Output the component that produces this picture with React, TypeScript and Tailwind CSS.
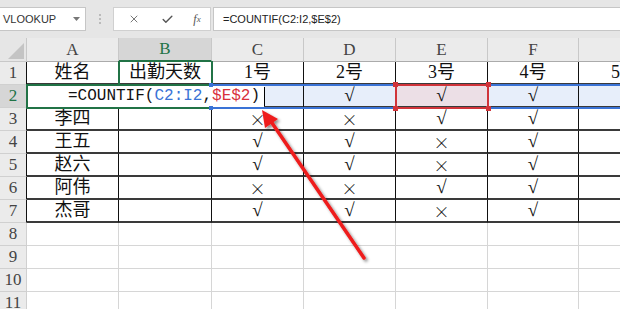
import { X, Check } from 'lucide-react';

const cols = [
  { key: 'A', w: 'w-[92px]' },
  { key: 'B', w: 'w-[93px]' },
  { key: 'C', w: 'w-[92px]' },
  { key: 'D', w: 'w-[92px]' },
  { key: 'E', w: 'w-[92px]' },
  { key: 'F', w: 'w-[91px]' },
  { key: 'G', w: 'w-[92px]' },
];

const table = [
  ['姓名', '出勤天数', '1号', '2号', '3号', '4号', '5号'],
  ['', '', '', '√', '√', '√', ''],
  ['李四', '', '×', '×', '√', '√', ''],
  ['王五', '', '√', '√', '×', '√', ''],
  ['赵六', '', '√', '√', '×', '√', ''],
  ['阿伟', '', '×', '×', '√', '√', ''],
  ['杰哥', '', '√', '√', '×', '√', ''],
];

const serif = "font-[family-name:'Liberation_Serif','Noto_Sans_CJK_SC',serif]";
const cross = "font-[family-name:'Noto_Sans_CJK_SC',sans-serif] font-light text-[16px]";
const tick = 'text-[19px] font-bold';

function Toolbar() {
  return (
    <div className="h-[38px] bg-[#e6e6e6] flex items-start pt-[7px] font-[family-name:'Liberation_Sans',Arial,sans-serif]">
      <div className="w-[86px] h-[24px] bg-white border border-l-0 border-[#c6c6c6] flex items-center pl-[3px] text-[11px] text-[#333]">
        <span className="flex-1">VLOOKUP</span>
        <svg width="7" height="4" viewBox="0 0 7 4" className="mr-[5px]">
          <polygon points="0,0 7,0 3.5,4" fill="#777" />
        </svg>
      </div>
      <div className="w-[27px] flex flex-col items-center gap-[2px] pt-[7px]">
        <div className="w-[2px] h-[2px] bg-[#bbb]" />
        <div className="w-[2px] h-[2px] bg-[#bbb]" />
        <div className="w-[2px] h-[2px] bg-[#bbb]" />
      </div>
      <div className="w-[98px] h-[24px] bg-white border border-[#d0d0d0] flex items-center text-[#555]">
        <div className="w-[36px] flex justify-center pl-[4px]">
          <X className="w-[12px] h-[12px]" strokeWidth={1.6} />
        </div>
        <div className="w-[28px] flex justify-center pl-[6px]">
          <Check className="w-[13px] h-[13px]" strokeWidth={2.6} />
        </div>
        <div className="flex-1 flex justify-center pl-[6px] italic font-[family-name:'Liberation_Serif',serif] text-[12px] text-[#555]">
          f<span className="text-[9px] mt-[3px]">x</span>
        </div>
      </div>
      <div className="ml-[2px] flex-1 h-[24px] bg-white border border-r-0 border-[#c6c6c6] flex items-center pl-[9px] text-[11px] text-[#222]">
        =COUNTIF(C2:I2,$E$2)
      </div>
    </div>
  );
}

function HeaderRow() {
  return (
    <div className={`h-[24px] flex ${serif}`}>
      <div className="w-[27px] h-full bg-[#e6e6e6] border-r border-b border-[#c8c8c8] shrink-0">
        <svg width="27" height="24" viewBox="0 0 27 24">
          <polygon points="24,5 24,21 8,21" fill="#c4c4c4" />
        </svg>
      </div>
      {cols.map((c) =>
        c.key === 'B' ? (
          <div
            key={c.key}
            className={`${c.w} shrink-0 h-full bg-[#d6d6d6] border-r border-[#c8c8c8] border-b-2 border-b-[#217346] flex items-center justify-center text-[17px] text-[#217346]`}
          >
            {c.key}
          </div>
        ) : (
          <div
            key={c.key}
            className={`${c.w} shrink-0 h-full bg-[#ebebeb] border-r border-[#c8c8c8] border-b border-b-[#ababab] flex items-center justify-center text-[17px] text-[#444]`}
          >
            {c.key === 'G' ? '' : c.key}
          </div>
        )
      )}
    </div>
  );
}

function cellBg(r: number, c: number) {
  if (r !== 1 || c < 2) return 'bg-white';
  if (c === 4) return 'bg-[#ecdfe6]';
  return 'bg-[#e7eefa]';
}

function textCls(v: string) {
  if (v === '√') return tick;
  if (v === '×') return cross;
  return 'text-[18px]';
}

export default function App() {
  const empty = [8, 9, 10, 11];
  return (
    <div className="relative w-[620px] h-[309px] overflow-hidden bg-white">
      <Toolbar />
      <HeaderRow />

      {table.map((row, r) => (
        <div key={r} className={`h-[23px] flex ${serif}`}>
          <div
            className={`w-[27px] shrink-0 h-full border-b border-[#d0d0d0] border-r border-r-[#111] flex items-center justify-center text-[17px] ${
              r === 1 ? 'bg-[#d6d6d6] text-[#217346]' : 'bg-[#ebebeb] text-[#444]'
            }`}
          >
            {r + 1}
          </div>
          {cols.map((c, ci) => (
            <div
              key={c.key}
              className={`${c.w} shrink-0 h-full ${cellBg(r, ci)} border-r border-r-[#111] border-b-2 border-b-[#3a3a3a] flex items-center justify-center text-[#111] ${textCls(row[ci])}`}
            >
              <span className="whitespace-nowrap">{row[ci]}</span>
            </div>
          ))}
        </div>
      ))}

      {empty.map((n) => (
        <div key={n} className={`h-[23px] flex ${serif}`}>
          <div className="w-[27px] shrink-0 h-full bg-[#ebebeb] border-b border-r border-[#d0d0d0] flex items-center justify-center text-[17px] text-[#444]">
            {n}
          </div>
          {cols.map((c) => (
            <div key={c.key} className={`${c.w} shrink-0 h-full border-r border-b border-[#d6d6d6]`} />
          ))}
        </div>
      ))}

      {/* range C2:I2 */}
      <div className="absolute left-[211px] top-[84px] w-[420px] h-[25px] border-2 border-r-0 border-[#3a73d6]" />
      {/* green selection */}
      <div className="absolute left-[118px] top-[61px] w-[95px] h-[25px] border-x-2 border-[#217346]" />
      <div className="absolute left-[26px] top-[84px] w-[187px] h-[25px] border-2 border-[#217346]" />
      {/* in-cell editor */}
      <div className="absolute left-[28px] top-[86px] w-[236px] h-[21px] bg-white pl-[40px] leading-[21px] text-[16px] whitespace-nowrap font-[family-name:'Liberation_Mono',monospace] text-[#111]">
        =COUNTIF(<span className="text-[#3a73d6]">C2:I2</span>,<span className="text-[#d9303b]">$E$2</span>)
      </div>
      <div className="absolute left-[264px] top-[87px] w-[1px] h-[19px] bg-black" />
      {/* E2 reference */}
      <div className="absolute left-[395px] top-[84px] w-[94px] h-[25px] border-2 border-[#d0343a]" />
      <div className="absolute left-[393px] top-[82px] w-[5px] h-[5px] bg-[#d0343a]" />
      <div className="absolute left-[486px] top-[82px] w-[5px] h-[5px] bg-[#d0343a]" />
      <div className="absolute left-[393px] top-[106px] w-[5px] h-[5px] bg-[#d0343a]" />
      <div className="absolute left-[486px] top-[106px] w-[5px] h-[5px] bg-[#d0343a]" />
      <div className="absolute left-[209px] top-[83px] w-[4px] h-[4px] bg-[#3a73d6]" />
      <div className="absolute left-[209px] top-[106px] w-[4px] h-[4px] bg-[#3a73d6]" />

      {/* annotation arrow */}
      <svg className="absolute inset-0 pointer-events-none" width="620" height="309" viewBox="0 0 620 309">
        <defs>
          <filter id="sh" x="-20%" y="-20%" width="140%" height="140%">
            <feDropShadow dx="2" dy="2" stdDeviation="1.5" floodColor="#000" floodOpacity="0.45" />
          </filter>
        </defs>
        <g filter="url(#sh)">
          <line x1="364" y1="258" x2="270" y2="120" stroke="#ee1c1c" strokeWidth="3.5" strokeLinecap="round" />
          <polygon points="262,110 265,128 278,119" fill="#ee1c1c" />
        </g>
      </svg>
    </div>
  );
}
